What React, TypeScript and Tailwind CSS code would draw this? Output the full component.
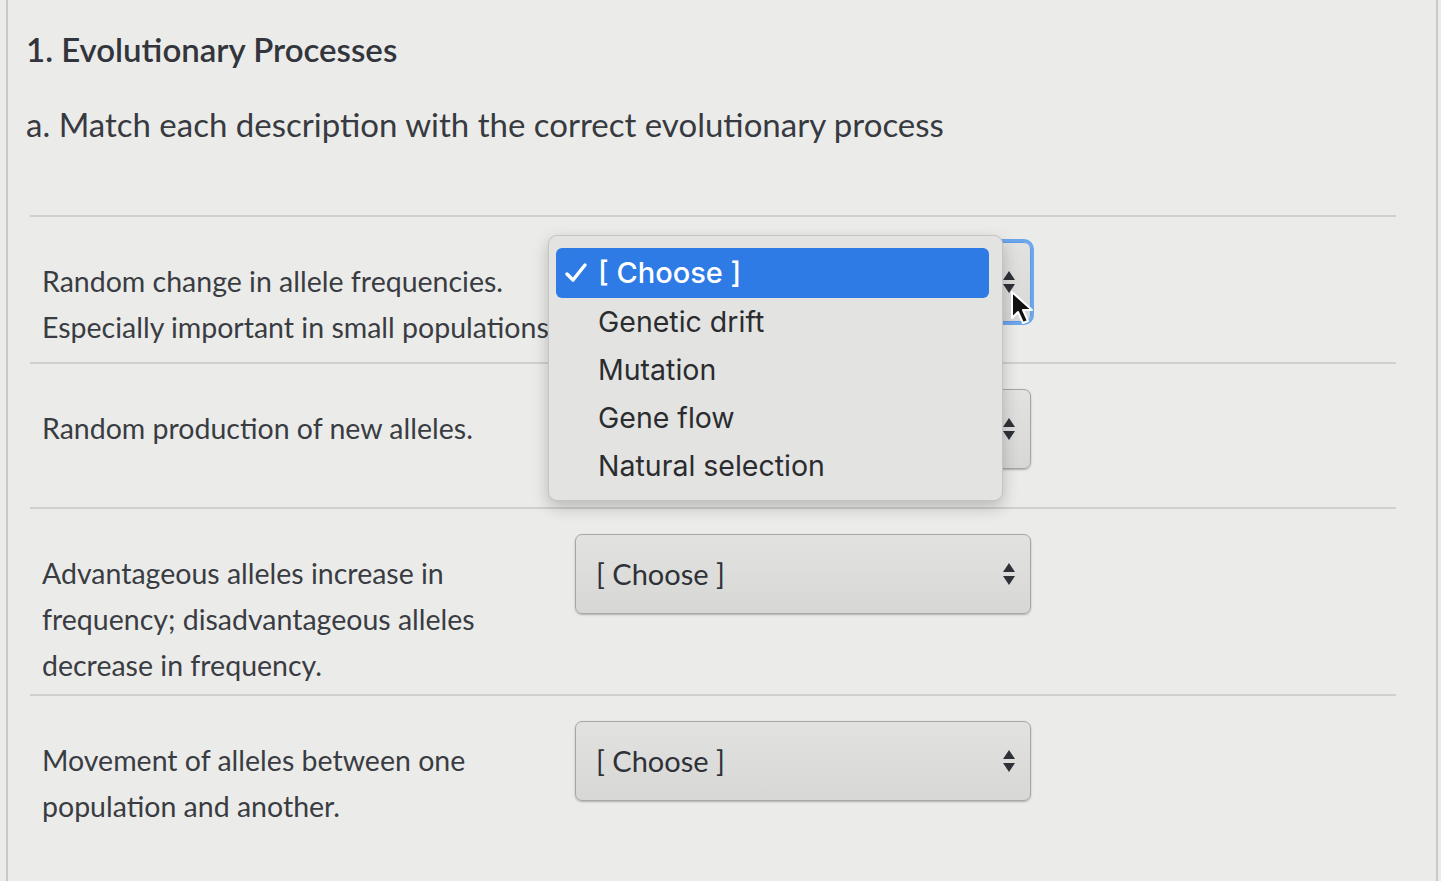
import React from "react";

const rows = [
  {
    id: 1,
    lines: ["Random change in allele frequencies.", "Especially important in small populations."],
    height: "h-[147px]",
    open: true,
    covered: true,
  },
  { id: 2, lines: ["Random production of new alleles."], height: "h-[145px]", open: false, covered: true },
  {
    id: 3,
    lines: ["Advantageous alleles increase in", "frequency; disadvantageous alleles", "decrease in frequency."],
    height: "h-[187px]",
    open: false,
    covered: false,
  },
  {
    id: 4,
    lines: ["Movement of alleles between one", "population and another."],
    height: "h-[184px]",
    open: false,
    covered: false,
  },
];

const options = ["Genetic drift", "Mutation", "Gene flow", "Natural selection"];

const Arrows = () => (
  <svg width="14" height="26" viewBox="0 0 14 26" className="shrink-0">
    <path d="M7 2 L13 11 L1 11 Z" fill="#2f3138" />
    <path d="M7 24 L13 15 L1 15 Z" fill="#2f3138" />
  </svg>
);

const Cursor = () => (
  <svg width="26" height="36" viewBox="0 0 26 36" className="absolute left-[435px] top-[73px]">
    <path
      d="M2 2 L2 28 L8 22 L13 33 L18 31 L13 20 L22 20 Z"
      fill="#111"
      stroke="#fff"
      strokeWidth="2"
      strokeLinejoin="round"
    />
  </svg>
);

const SelectBox = ({ focused, covered }: { focused: boolean; covered: boolean }) => (
  <div
    className={
      "flex h-[80px] w-[456px] items-center justify-between rounded-[7px] border bg-gradient-to-b from-[#e2e3e0] to-[#d7d8d5] pl-[20px] pr-[14px] shadow-[0_1px_2px_rgba(0,0,0,0.25)] " +
      (focused ? "border-[#5d9be8] ring-[3px] ring-[#6ea6ec]" : "border-[#a6a7a5]")
    }
  >
    <span className={"text-[29px] text-[#2f3138]" + (covered ? " invisible" : "")}>[ Choose ]</span>
    <Arrows />
  </div>
);

const Menu = () => (
  <div className="absolute left-[-27px] top-[18px] w-[455px] rounded-[9px] border border-[#c4c5c2] bg-[#e3e4e1] pb-[10px] pl-[7px] pr-[13px] pt-[12px] shadow-[0_6px_16px_rgba(0,0,0,0.22)] font-['Inter',sans-serif]">
    <div className="flex h-[50px] items-center rounded-[6px] bg-[#2e7be6] pl-[8px] text-white">
      <svg width="24" height="22" viewBox="0 0 24 22" className="mr-[10px]">
        <path d="M3 12 L9 18 L21 3" fill="none" stroke="#fff" strokeWidth="3.5" strokeLinecap="round" strokeLinejoin="round" />
      </svg>
      <span className="text-[29px] font-medium">[ Choose ]</span>
    </div>
    {options.map((o) => (
      <div key={o} className="flex h-[48px] items-center pl-[42px] text-[28.5px] text-[#2b2c30]">
        {o}
      </div>
    ))}
  </div>
);

export default function App() {
  return (
    <div className="min-h-[881px] w-[1441px] overflow-hidden bg-[#ebece9] font-['Lato',sans-serif] text-[#393b42]">
      <div className="ml-[6px] mr-[3px] min-h-[881px] border-x-2 border-[#c9cac7] pl-[18px]">
        <h1 className="pt-[29px] text-[33px] font-semibold leading-[40px] text-[#33353c]">1. Evolutionary Processes</h1>
        <p className="mt-[35px] text-[33px] leading-[40px] text-[#383a41]">
          a. Match each description with the correct evolutionary process
        </p>

        <div className="ml-[4px] mt-[71px] w-[1366px] border-t-2 border-[#cfd0cd]">
          {rows.map((r, i) => (
            <div
              key={r.id}
              className={
                "relative flex items-start " +
                r.height +
                (r.open ? " z-10" : "") +
                (i < rows.length - 1 ? " border-b-2 border-[#cfd0cd]" : "")
              }
            >
              <div className="w-[545px] shrink-0 overflow-hidden whitespace-nowrap pl-[12px] pt-[41px] text-[28.5px] leading-[46px] text-[#3a3c43]">
                {r.lines.map((l) => (
                  <div key={l}>{l}</div>
                ))}
              </div>
              <div className="relative pt-[25px]">
                <SelectBox focused={r.open} covered={r.covered} />
                {r.open && (
                  <>
                    <Menu />
                    <Cursor />
                  </>
                )}
              </div>
            </div>
          ))}
        </div>
      </div>
    </div>
  );
}
